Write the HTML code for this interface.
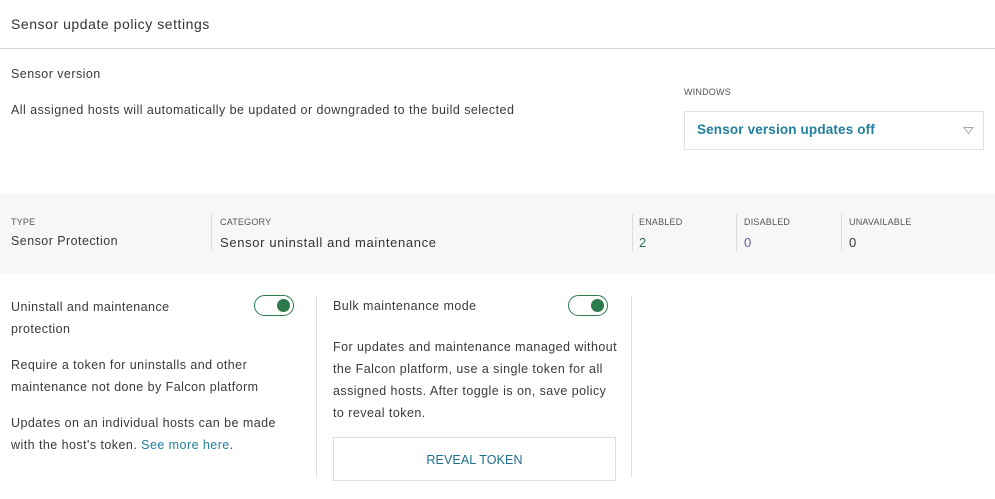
<!DOCTYPE html>
<html><head><style>
*{margin:0;padding:0;box-sizing:border-box}
body{width:995px;height:499px;background:#fff;font-family:"Liberation Sans",sans-serif;color:#333;position:relative;overflow:hidden}
.a{position:absolute;white-space:nowrap}
.s{font-size:12.5px;color:#3a3a3a;letter-spacing:.45px}
.l{font-size:9px;color:#555;letter-spacing:.2px}
.vd{position:absolute;width:1px;background:#ddd}
.tg{position:absolute;width:40px;height:21px;border:1.5px solid #2d7a4c;border-radius:11px;background:#fff}
.tg:after{content:"";position:absolute;right:3px;top:2.5px;width:13px;height:13px;border-radius:50%;background:#2d7a4c}
</style></head><body>
<div class="a" style="left:11px;top:16px;font-size:14px;color:#333;letter-spacing:.55px">Sensor update policy settings</div>
<div style="position:absolute;left:0;top:48px;width:995px;height:1px;background:#d8d8d8"></div>
<div class="a s" style="left:11px;top:67px">Sensor version</div>
<div class="a s" style="left:11px;top:103px">All assigned hosts will automatically be updated or downgraded to the build selected</div>
<div class="a l" style="left:684px;top:87px">WINDOWS</div>
<div style="position:absolute;left:684px;top:111px;width:300px;height:39px;border:1px solid #e2e2e2"></div>
<div class="a" style="left:697px;top:122px;font-size:13.5px;font-weight:bold;color:#1f7f9c;letter-spacing:.15px">Sensor version updates off</div>
<svg class="a" style="left:963px;top:126px" width="11" height="9"><path d="M1 1.5h9L5.5 7.5z" fill="none" stroke="#aaa" stroke-width="1"/></svg>
<div style="position:absolute;left:0;top:194px;width:995px;height:80px;background:#f7f7f7"></div>
<div class="a l" style="left:11px;top:217px">TYPE</div>
<div class="a s" style="left:11px;top:234px">Sensor Protection</div>
<div class="vd" style="left:211px;top:214px;height:37px"></div>
<div class="a l" style="left:220px;top:217px">CATEGORY</div>
<div class="a" style="left:220px;top:235px;font-size:13px;color:#333;letter-spacing:.65px">Sensor uninstall and maintenance</div>
<div class="vd" style="left:632px;top:214px;height:37px"></div>
<div class="a l" style="left:639px;top:217px">ENABLED</div>
<div class="a" style="left:639px;top:235px;font-size:13px;color:#2a6a5a">2</div>
<div class="vd" style="left:736px;top:214px;height:37px"></div>
<div class="a l" style="left:744px;top:217px">DISABLED</div>
<div class="a" style="left:744px;top:235px;font-size:13px;color:#6a5a9a">0</div>
<div class="vd" style="left:841px;top:214px;height:37px"></div>
<div class="a l" style="left:849px;top:217px">UNAVAILABLE</div>
<div class="a" style="left:849px;top:235px;font-size:13px;color:#333">0</div>

<div class="a s" style="left:11px;top:296px;line-height:22px">Uninstall and maintenance<br>protection</div>
<div class="tg" style="left:254px;top:295px"></div>
<div class="a s" style="left:11px;top:354px;line-height:22px">Require a token for uninstalls and other<br>maintenance not done by Falcon platform</div>
<div class="a s" style="left:11px;top:412px;line-height:22px">Updates on an individual hosts can be made<br>with the host's token. <span style="color:#1f7f9c">See more here</span>.</div>
<div class="vd" style="left:316px;top:296px;height:181px"></div>
<div class="a s" style="left:333px;top:299px">Bulk maintenance mode</div>
<div class="tg" style="left:568px;top:295px"></div>
<div class="a s" style="left:333px;top:336px;line-height:22px">For updates and maintenance managed without<br>the Falcon platform, use a single token for all<br>assigned hosts. After toggle is on, save policy<br>to reveal token.</div>
<div style="position:absolute;left:333px;top:437px;width:283px;height:44px;border:1px solid #ddd"></div>
<div class="a" style="left:333px;top:453px;width:283px;text-align:center;font-size:12.5px;color:#1f6f8c;letter-spacing:.1px">REVEAL TOKEN</div>
<div class="vd" style="left:631px;top:296px;height:181px"></div>
</body></html>
